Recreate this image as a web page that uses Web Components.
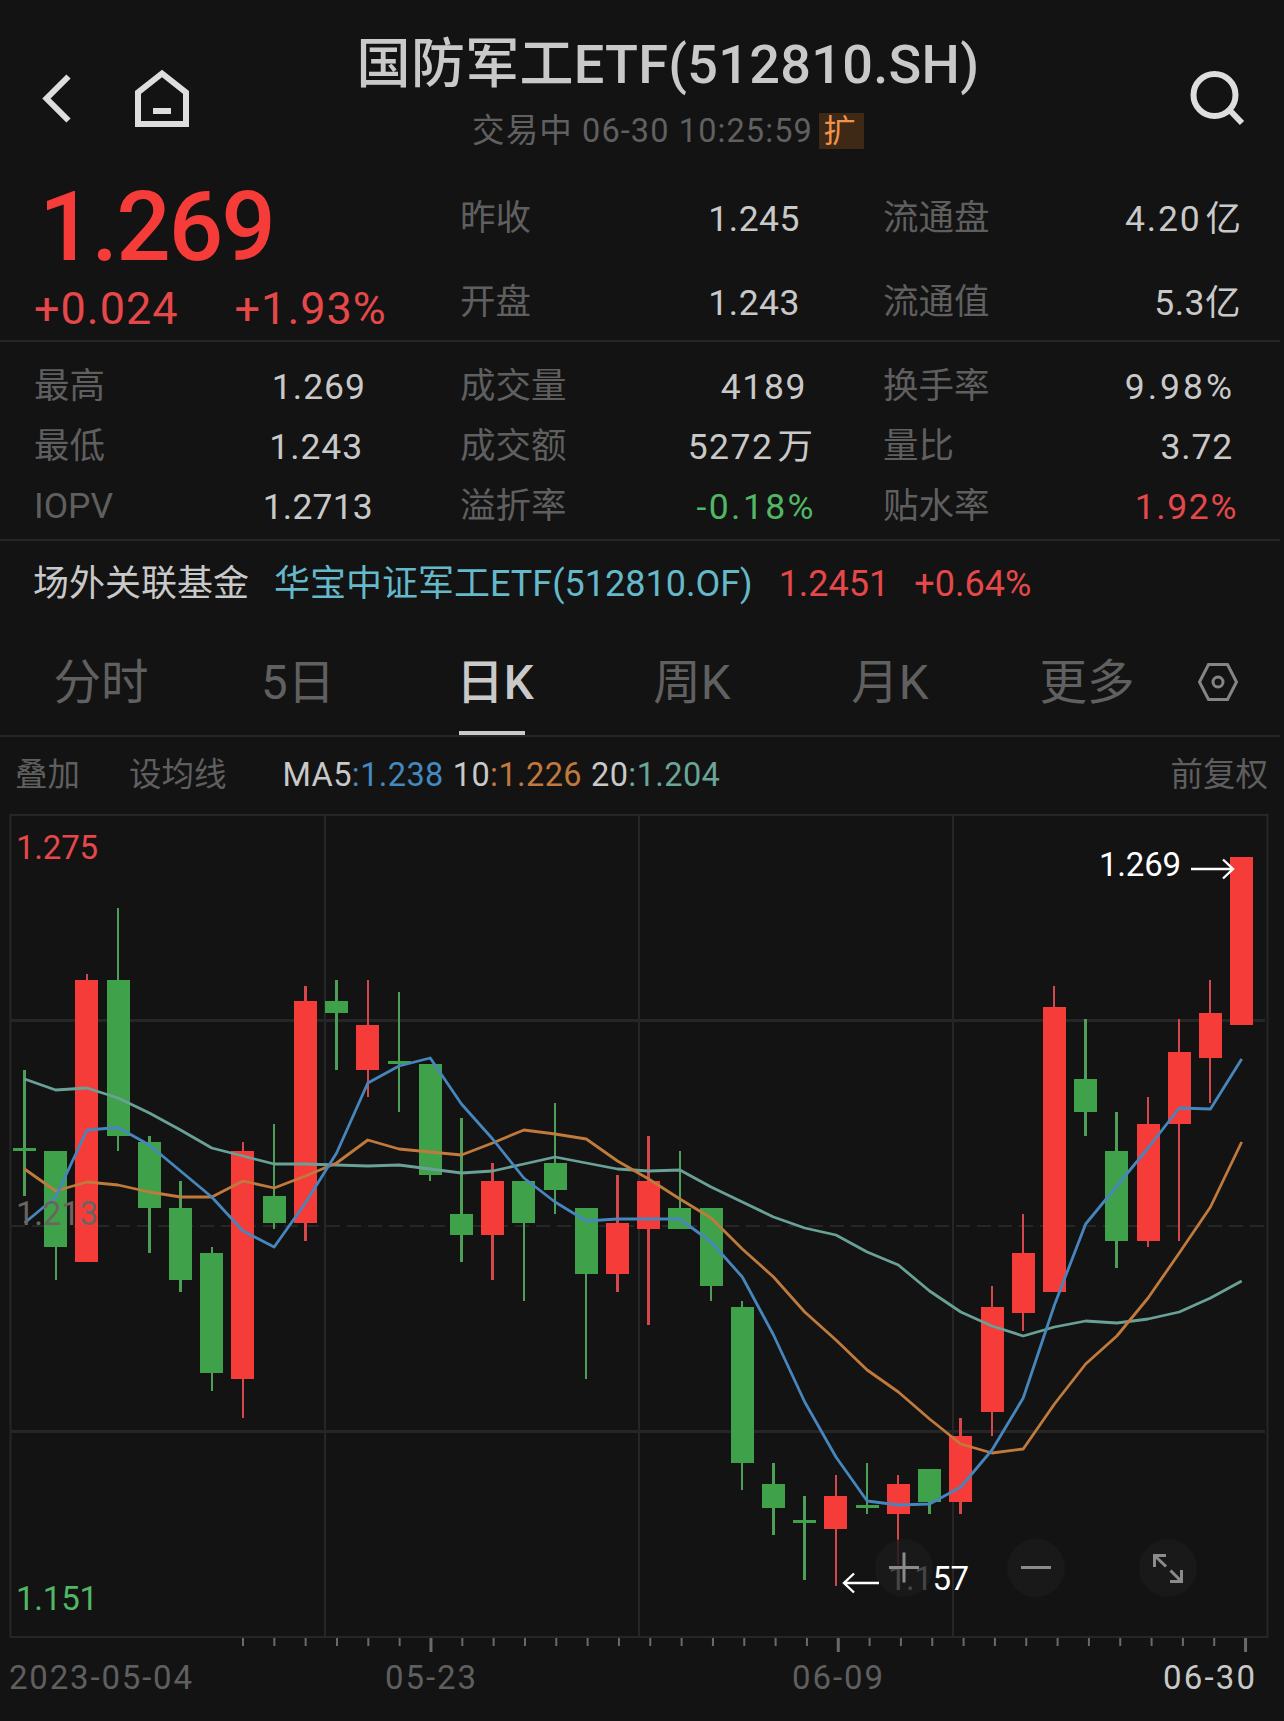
<!DOCTYPE html>
<html lang="zh-CN">
<head>
<meta charset="utf-8">
<title>国防军工ETF</title>
<style>
  body {
    margin: 0;
    background: #131313;
    color: #c9c9c9;
    font-family: Roboto, "Noto Sans CJK SC", sans-serif;
    overflow: hidden;
  }
</style>
</head>
<body>
<etf-page></etf-page>

<script>
/**
 * Attach an open shadow root filled with the given markup.
 */
function render (element, html) {
  const template = document.createElement('template')
  template.innerHTML = html
  element.attachShadow({ mode: 'open' }).appendChild(template.content.cloneNode(true))
}

customElements.define('etf-header',
  /**
   * Title bar with navigation icons.
   */
  class extends HTMLElement {
    constructor () {
      super()
      render(this, `
        <style>
          :host {
            display: grid;
            grid-template-columns: 190px 1fr 84px;
            height: 171px;
            padding: 0 36px;
            box-sizing: border-box;
          }
          nav {
            display: flex;
            gap: 58px;
            padding-top: 66px;
          }
          svg {
            display: block;
            fill: none;
            stroke: #dedede;
          }
          .middle {
            display: flex;
            flex-direction: column;
            align-items: center;
            padding-right: 54px;
          }
          h1 {
            margin: 31px 0 0;
            font-size: 54px;
            line-height: 68px;
            font-weight: 500;
            letter-spacing: 0.3px;
            color: #c9c9c9;
            white-space: nowrap;
          }
          .status {
            display: flex;
            align-items: center;
            gap: 6px;
            height: 36px;
            margin-top: 14px;
            font-size: 32.5px;
            line-height: 40px;
            letter-spacing: 1.1px;
            color: #606060;
            white-space: nowrap;
          }
          .badge {
            width: 45px;
            height: 36px;
            padding-right: 4px;
            box-sizing: border-box;
            text-align: center;
            font-size: 32px;
            line-height: 36px;
            letter-spacing: 0;
            color: #f0924a;
            background: #3d2916;
          }
          .search {
            justify-self: end;
            padding-top: 66px;
          }
        </style>
        <nav>
          <svg width="40" height="64" viewBox="0 0 40 64" stroke-width="6"><path d="M32.500 10.500 10.500 32.500 32.500 54.500"/></svg>
          <svg width="58" height="64" viewBox="0 0 58 64" stroke-width="6"><path d="M4 58V26.500L28 7.500 52 26.500V58ZM19 45H37"/></svg>
        </nav>
        <div class="middle">
          <h1><slot></slot></h1>
          <div class="status"><slot name="status"></slot><span class="badge">扩</span></div>
        </div>
        <div class="search">
          <svg width="60" height="64" viewBox="0 0 60 64" stroke-width="6"><circle cx="26.500" cy="29" r="21"/><path d="M41.500 44 54 57"/></svg>
        </div>
      `)
    }
  }
)

customElements.define('etf-stat',
  /**
   * One label with its value, the value kept to the right.
   */
  class extends HTMLElement {
    constructor () {
      super()
      render(this, `
        <style>
          :host {
            display: flex;
            justify-content: space-between;
            font-size: 35.500px;
            line-height: 60px;
            white-space: nowrap;
          }
          .label {
            color: #5f5f5f;
          }
          .value {
            padding-top: 1px;
            padding-right: var(--inset, 0px);
            letter-spacing: var(--spacing, 0.500px);
          }
          ::slotted(i) {
            font-style: normal;
            letter-spacing: 0;
            margin-left: 4px;
          }
        </style>
        <span class="label"></span>
        <span class="value"><slot></slot></span>
      `)
      this.shadowRoot.querySelector('.label').textContent = this.getAttribute('label')
    }
  }
)

customElements.define('etf-quote',
  /**
   * Latest price and the figures around it.
   */
  class extends HTMLElement {
    constructor () {
      super()
      render(this, `
        <style>
          :host {
            display: block;
            width: 1280px;
          }
          .top {
            display: grid;
            grid-template-columns: 426px 340px 357px;
            height: 171px;
            padding-left: 34px;
            border-bottom: 2px solid #262626;
            box-sizing: border-box;
          }
          .last {
            color: #f53c39;
          }
          .price {
            height: 110px;
            padding-left: 5px;
            font-size: 96px;
            line-height: 113px;
            font-weight: 500;
            letter-spacing: -2px;
          }
          .change {
            display: flex;
            gap: 56px;
            font-size: 45px;
            line-height: 55px;
            letter-spacing: 1px;
            color: #e6484a;
          }
          .pair {
            display: flex;
            flex-direction: column;
            gap: 23px;
            padding-top: 17px;
          }
          .pair + .pair {
            padding-left: 83px;
            width: 358px;
          }
          .table {
            display: grid;
            grid-template-columns: 426px 423px 358px;
            grid-auto-rows: 60px;
            height: 199px;
            padding: 14px 0 0 34px;
            border-bottom: 2px solid #262626;
            box-sizing: border-box;
          }
          .red { color: #e6484a; }
          .green { color: #52b765; }
          .table .label { color: #5f5f5f; }
        </style>
        <div class="top">
          <div class="last">
            <div class="price">1.269</div>
            <div class="change"><span>+0.024</span><span>+1.93%</span></div>
          </div>
          <div class="pair">
            <etf-stat label="昨收">1.245</etf-stat>
            <etf-stat label="开盘">1.243</etf-stat>
          </div>
          <div class="pair">
            <etf-stat label="流通盘" style="--spacing:1.8px">4.20<i>亿</i></etf-stat>
            <etf-stat label="流通值">5.3亿</etf-stat>
          </div>
        </div>
        <div class="table">
          <etf-stat label="最高" style="--inset:94px;--spacing:1px">1.269</etf-stat>
          <etf-stat label="成交量" style="--inset:76px;--spacing:1.6px">4189</etf-stat>
          <etf-stat label="换手率" style="--inset:6px;--spacing:3px">9.98%</etf-stat>
          <etf-stat label="最低" style="--inset:97px;--spacing:0.9px">1.243</etf-stat>
          <etf-stat label="成交额" style="--inset:70px;--spacing:1.5px">5272<i>万</i></etf-stat>
          <etf-stat label="量比" style="--inset:8px;--spacing:0.8px">3.72</etf-stat>
          <etf-stat label="IOPV" style="--inset:87px;--spacing:0.2px">1.2713</etf-stat>
          <etf-stat label="溢折率" class="green" style="--inset:67px;--spacing:2.4px">-0.18%</etf-stat>
          <etf-stat label="贴水率" class="red" style="--inset:3px;--spacing:1.6px">1.92%</etf-stat>
        </div>
      `)
    }
  }
)

customElements.define('etf-fund',
  /**
   * Linked off-exchange fund.
   */
  class extends HTMLElement {
    constructor () {
      super()
      render(this, `
        <style>
          :host {
            display: flex;
            height: 84px;
            padding-left: 33px;
            font-size: 36px;
            line-height: 86px;
            white-space: nowrap;
            color: #c9c9c9;
          }
          .link {
            margin-left: 25px;
            color: #64b9cb;
          }
          .value {
            margin-left: 26px;
            color: #e6484a;
          }
          .value + .value {
            margin-left: 25px;
          }
        </style>
        <span>场外关联基金</span>
        <span class="link">华宝中证军工ETF(512810.OF)</span>
        <span class="value">1.2451</span>
        <span class="value">+0.64%</span>
      `)
    }
  }
)

customElements.define('etf-tabs',
  /**
   * Period tabs above the chart.
   */
  class extends HTMLElement {
    constructor () {
      super()
      render(this, `
        <style>
          :host {
            display: grid;
            grid-template-columns: 202px 192px 202px 192px 204px 190px 72px;
            width: 1280px;
            height: 112px;
            box-sizing: border-box;
            border-bottom: 2px solid #262626;
            font-size: 47.500px;
            color: #606060;
            justify-items: center;
          }
          span {
            height: 110px;
            line-height: 116px;
            white-space: nowrap;
          }
          .active {
            color: #c9c9c9;
            font-weight: 500;
          }
          .active::after {
            content: "";
            display: block;
            width: 66px;
            height: 4px;
            margin: -10px 0 0 3px;
            background: #c9c9c9;
          }
          svg {
            align-self: start;
            margin-top: 35px;
            fill: none;
            stroke: #858585;
            stroke-width: 3;
          }
        </style>
        <span>分时</span>
        <span>5日</span>
        <span class="active">日K</span>
        <span>周K</span>
        <span>月K</span>
        <span>更多</span>
        <svg width="46" height="44" viewBox="0 0 46 44"><path d="M13.500 4.500H32.500L41.500 22 32.500 39.500H13.500L4.500 22Z"/><circle cx="23" cy="22" r="5"/></svg>
      `)
    }
  }
)

customElements.define('etf-averages',
  /**
   * Moving average legend.
   */
  class extends HTMLElement {
    constructor () {
      super()
      render(this, `
        <style>
          :host {
            display: flex;
            height: 76px;
            padding: 0 16px 0 15px;
            font-size: 32.500px;
            line-height: 76px;
            white-space: nowrap;
            color: #5f5f5f;
          }
          .set { margin-left: 49px; }
          .legend {
            display: flex;
            gap: 9px;
            margin-left: 56px;
            color: #c9c9c9;
            letter-spacing: 0.4px;
            flex: 1;
          }
          .ma5 { color: #4489bf; }
          .ma10 { color: #c1793c; }
          .ma20 { color: #6aa598; }
        </style>
        <span>叠加</span>
        <span class="set">设均线</span>
        <div class="legend">
          <span>MA5<span class="ma5">:1.238</span></span>
          <span>10<span class="ma10">:1.226</span></span>
          <span>20<span class="ma20">:1.204</span></span>
        </div>
        <span>前复权</span>
      `)
    }
  }
)

// direction, high, top of body, bottom of body, low
const CANDLES = [
  ['g', 1070, 1148, 1151, 1196], ['g', 1151, 1151, 1247, 1280], ['r', 974, 980, 1262, 1262],
  ['g', 908, 980, 1136, 1151], ['g', 1136, 1142, 1208, 1253], ['g', 1181, 1208, 1280, 1292],
  ['g', 1247, 1253, 1373, 1391], ['r', 1142, 1151, 1379, 1418], ['g', 1124, 1196, 1223, 1229],
  ['r', 986, 1001, 1223, 1241], ['g', 980, 1001, 1013, 1070], ['r', 980, 1025, 1070, 1097],
  ['g', 992, 1061, 1064, 1112], ['g', 1064, 1064, 1175, 1181], ['g', 1118, 1214, 1235, 1262],
  ['r', 1163, 1181, 1235, 1280], ['g', 1181, 1181, 1223, 1301], ['g', 1103, 1163, 1190, 1214],
  ['g', 1208, 1208, 1274, 1379], ['r', 1175, 1223, 1274, 1292], ['r', 1136, 1181, 1229, 1325],
  ['g', 1151, 1208, 1229, 1229], ['g', 1208, 1208, 1286, 1301], ['g', 1301, 1307, 1463, 1490],
  ['g', 1463, 1484, 1508, 1535], ['g', 1496, 1520, 1523, 1580], ['r', 1475, 1496, 1529, 1586],
  ['g', 1463, 1505, 1508, 1514], ['r', 1475, 1484, 1514, 1565], ['g', 1469, 1469, 1502, 1514],
  ['r', 1418, 1436, 1502, 1514], ['r', 1286, 1307, 1412, 1436], ['r', 1214, 1253, 1313, 1331],
  ['r', 986, 1007, 1292, 1292], ['g', 1019, 1079, 1112, 1136], ['g', 1112, 1151, 1241, 1268],
  ['r', 1097, 1124, 1241, 1247], ['r', 1019, 1052, 1124, 1241], ['r', 980, 1013, 1058, 1103],
  ['r', 857, 857, 1025, 1025]
]

const AVERAGES = {
  '#6aa197': [1079, 1090, 1088, 1098, 1113, 1130, 1148, 1156, 1164, 1164, 1165, 1166, 1165, 1169,
    1173, 1171, 1164, 1157, 1163, 1169, 1171, 1170, 1187, 1202, 1217, 1228, 1235, 1252, 1265, 1291,
    1312, 1326, 1336, 1327, 1321, 1323, 1319, 1312, 1298, 1281],
  '#c07a3c': [1169, 1191, 1182, 1185, 1192, 1197, 1197, 1181, 1188, 1176, 1163, 1140, 1149, 1152,
    1155, 1143, 1130, 1134, 1139, 1161, 1179, 1199, 1218, 1249, 1277, 1312, 1340, 1370, 1392, 1419,
    1444, 1453, 1449, 1404, 1364, 1336, 1298, 1253, 1207, 1142],
  '#4686bd': [1223, 1197, 1130, 1127.5, 1145, 1171, 1197, 1231, 1247, 1203, 1153, 1083, 1066, 1058,
    1104, 1139, 1178, 1202, 1221, 1219, 1219, 1219, 1242, 1277, 1335, 1402, 1457, 1501, 1505, 1504,
    1487, 1450, 1398, 1305, 1224, 1186, 1148, 1108, 1109, 1059]
}

customElements.define('etf-chart',
  /**
   * Daily candles with moving averages and the date axis.
   */
  class extends HTMLElement {
    constructor () {
      super()
      render(this, `
        <style>
          :host {
            display: block;
            height: 908px;
          }
          svg { display: block; }
          text { font-size: 33px; }
        </style>
        <svg width="1284" height="908" viewBox="0 813 1284 908">
          <g fill="none" stroke="#262626" stroke-width="2">
            <path d="M10.500 815H1267.500V1637H10.500ZM325 815V1637M639 815V1637M953 815V1637"/>
            <path stroke-width="3" d="M11 1020.500H1265M11 1431.500H1265"/>
            <path stroke-dasharray="14 7" d="M11 1226H1265"/>
          </g>
          <g id="ticks" stroke="#6a6a6a" stroke-width="2"></g>
          <g id="candles" shape-rendering="crispEdges"></g>
          <g id="averages" fill="none" stroke-width="2.800" stroke-linejoin="round"></g>
          <g fill="#1a1a1a" fill-opacity="0.84">
            <circle cx="904" cy="1568" r="29"/>
            <circle cx="1036" cy="1568" r="29"/>
            <circle cx="1168" cy="1568" r="29"/>
          </g>
          <text x="16" y="859" textLength="82" fill="#e6484a">1.275</text>
          <text x="16" y="1225" textLength="82" fill="#6b6460">1.213</text>
          <text x="16" y="1610" textLength="82" fill="#52b765">1.151</text>
          <text x="1099" y="876" textLength="82" fill="#fff">1.269</text>
          <text x="888" y="1590" textLength="81" fill="#fff"><tspan fill="#464646">1.1</tspan>57</text>
          <g fill="none" stroke="#8b8b8b" stroke-width="3">
            <path d="M889 1567.500H919M904 1552.500V1582.500"/>
            <path d="M1021 1567.500H1051"/>
            <path d="M1154.500 1567V1555.500H1166M1155 1556 1166 1566.500M1181.500 1570V1581.500H1170M1181 1581 1170.500 1570.500"/>
          </g>
          <g fill="none" stroke="#fff" stroke-width="2.400">
            <path d="M1191 869H1233M1223 859.500 1233 869 1223 878.500"/>
            <path d="M879 1583H844M854 1573.500 844 1583 854 1592.500"/>
          </g>
          <g fill="#5f5f5f">
            <text x="9" y="1689" textLength="183">2023-05-04</text>
            <text x="385" y="1689" textLength="91">05-23</text>
            <text x="792" y="1689" textLength="91">06-09</text>
            <text x="1163" y="1689" textLength="92" fill="#c9c9c9">06-30</text>
          </g>
        </svg>
      `)
      this.drawTicks()
      this.drawCandles()
      this.drawAverages()
    }

    columnX (index) {
      return 24.5 + 31.21 * index
    }

    drawTicks () {
      let ticks = ''
      for (let i = 0; i < 33; i++) {
        const long = i === 6 || i === 19 || i === 32
        const x = 243 + 31.33 * i
        ticks += `<path d="M${x} 1638V${long ? 1652 : 1646}" ${long ? 'stroke-width="3"' : ''}/>`
      }
      this.shadowRoot.querySelector('#ticks').innerHTML = ticks
    }

    drawCandles () {
      this.shadowRoot.querySelector('#candles').innerHTML = CANDLES.map(([side, high, top, bottom, low], i) => {
        const x = this.columnX(i)
        const body = side === 'r' ? '#f53c38' : '#3fa24b'
        const wick = side === 'r' ? '#d5474a' : '#4d9f57'
        const wickWidth = i % 5 === 0 || i % 5 === 4 ? 3 : 2
        return `<rect x="${Math.round(x - wickWidth / 2)}" y="${high}" width="${wickWidth}" height="${low - high}" fill="${wick}"/>
          <rect x="${Math.round(x - 11.5)}" y="${top}" width="23" height="${bottom - top}" fill="${body}"/>`
      }).join('')
    }

    drawAverages () {
      this.shadowRoot.querySelector('#averages').innerHTML = Object.entries(AVERAGES).map(([color, values]) => {
        const points = values.map((y, i) => `${this.columnX(i)},${y}`).join(' ')
        return `<polyline stroke="${color}" points="${points}"/>`
      }).join('')
    }
  }
)

customElements.define('etf-page',
  /**
   * The whole quote page.
   */
  class extends HTMLElement {
    constructor () {
      super()
      render(this, `
        <style>
          :host {
            display: block;
            width: 1284px;
            height: 1721px;
            overflow: hidden;
          }
        </style>
        <etf-header>国防军工ETF(512810.SH)<span slot="status">交易中 06-30 10:25:59</span></etf-header>
        <etf-quote></etf-quote>
        <etf-fund></etf-fund>
        <etf-tabs></etf-tabs>
        <etf-averages></etf-averages>
        <etf-chart></etf-chart>
      `)
    }
  }
)
</script>
</body>
</html>
